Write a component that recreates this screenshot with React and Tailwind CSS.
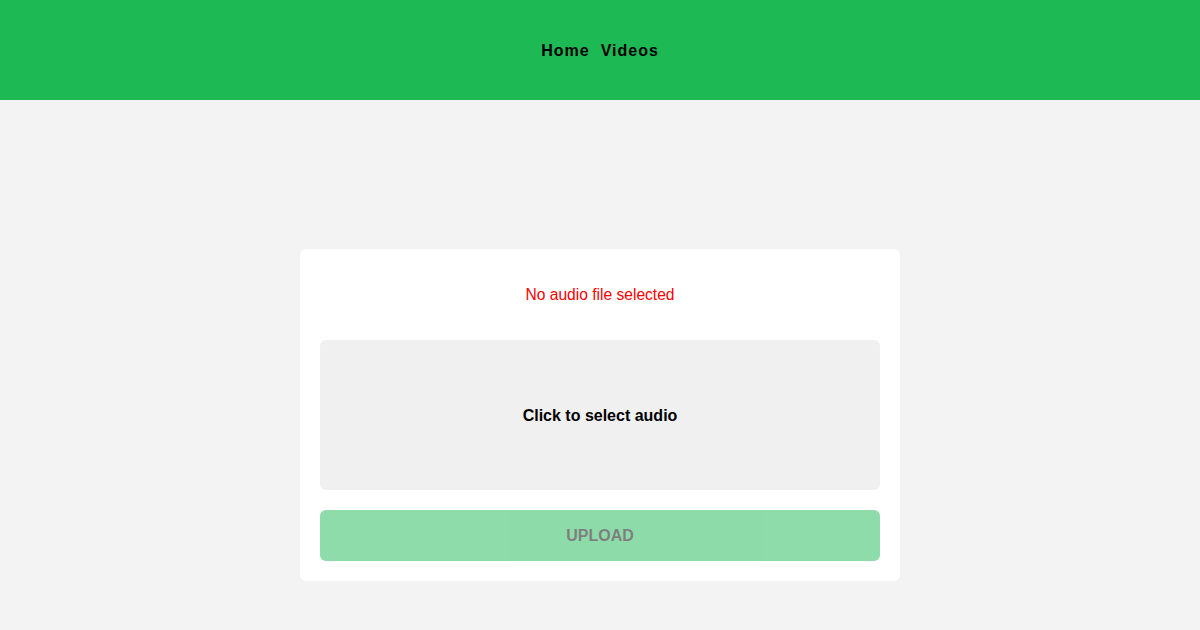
export default function App() {
  return (
    <div className="min-h-screen bg-[#f3f3f3]" style={{ fontFamily: '"Liberation Sans", Arial, sans-serif' }}>
      <header className="h-[100px] bg-[#1db954] flex items-center justify-center gap-[11px] pt-[2px]">
        <a className="text-[16px] font-bold tracking-[1px] text-black">Home</a>
        <a className="text-[16px] font-bold tracking-[1px] text-black">Videos</a>
      </header>
      <main className="h-[630px] flex items-center justify-center">
        <div className="w-[600px] bg-white rounded-md p-5 flex flex-col gap-5">
          <div className="h-[51px] flex items-center justify-center text-[15.6px] text-[#ff0000]">
            No audio file selected
          </div>
          <div className="h-[150px] bg-[#f0f0f0] rounded-md flex items-center justify-center pt-[2px] text-[16px] font-bold text-black cursor-pointer">
            Click to select audio
          </div>
          <button disabled className="h-[51px] rounded-md bg-[#1db954] opacity-50 text-[16px] font-bold text-black">
            UPLOAD
          </button>
        </div>
      </main>
    </div>
  );
}
